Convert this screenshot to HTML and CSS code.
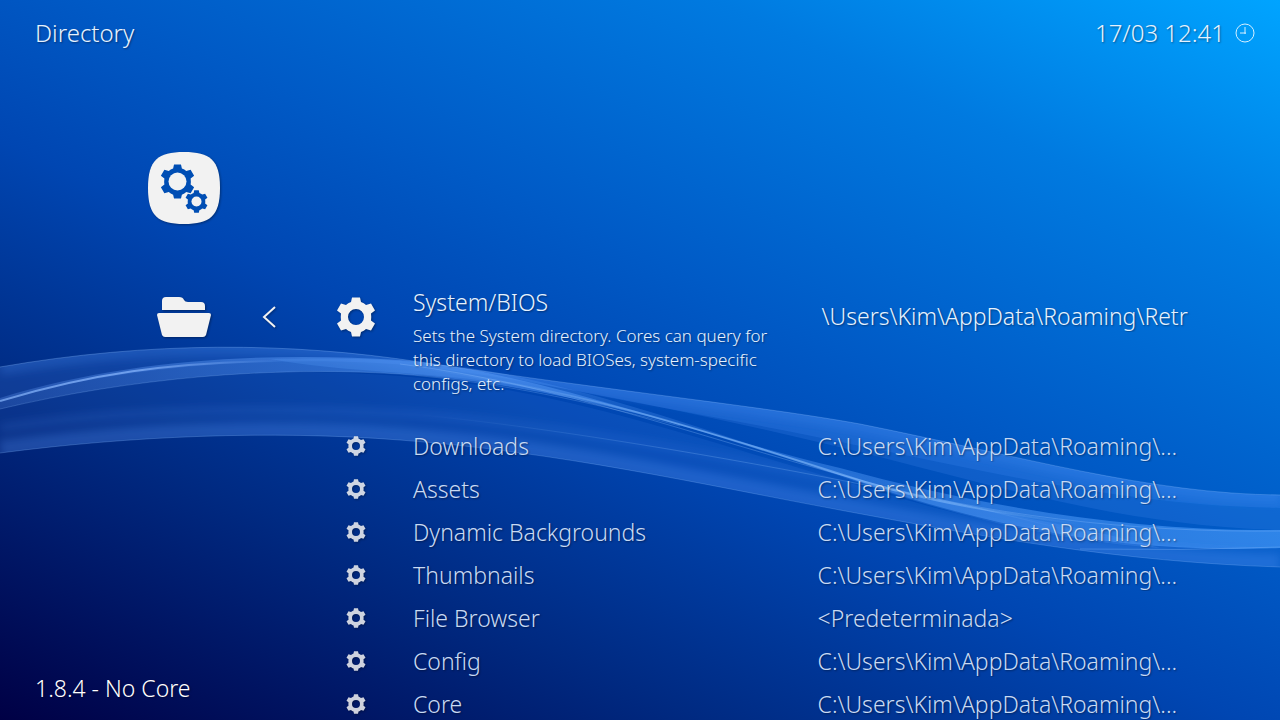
FILE: index.html
```html
<!DOCTYPE html>
<html lang="es">
<head>
  <meta charset="UTF-8">
  <meta name="viewport" content="width=device-width, initial-scale=1">
  <title>Directory</title>
  <link rel="stylesheet" href="styles.css">
</head>
<body>

  <!-- shared icon -->
  <svg class="sprite" width="0" height="0" aria-hidden="true">
    <symbol id="gear" viewBox="-20 -20 40 40">
      <path fill-rule="evenodd" d="M-4 -19.500H4L5 -15Q8 -14 10 -12L15 -13.500L19 -6.500L15 -3.500Q15.500 0 15 3.500L19 6.500L15 13.500L10 12Q8 14 5 15L4 19.500H-4L-5 15Q-8 14 -10 12L-15 13.500L-19 6.500L-15 3.500Q-15.500 0 -15 -3.500L-19 -6.500L-15 -13.500L-10 -12Q-8 -14 -5 -15ZM0 -8A8 8 0 1 0 0 8A8 8 0 1 0 0 -8Z"/>
    </symbol>
  </svg>

  <div class="screen">
    <svg class="waves" viewBox="0 0 1280 720" preserveAspectRatio="none" aria-hidden="true">
      <defs>
        <linearGradient id="fade-out" gradientUnits="userSpaceOnUse" x1="0" y1="0" x2="280" y2="0">
          <stop offset="0" stop-color="#8ab8ff" stop-opacity=".7"/>
          <stop offset=".5" stop-color="#8ab8ff" stop-opacity=".7"/>
          <stop offset="1" stop-color="#8ab8ff" stop-opacity="0"/>
        </linearGradient>
        <linearGradient id="fade-both" gradientUnits="userSpaceOnUse" x1="420" y1="0" x2="1080" y2="0">
          <stop offset="0" stop-color="#8fc4ff" stop-opacity="0"/>
          <stop offset=".4" stop-color="#8fc4ff" stop-opacity=".5"/>
          <stop offset=".8" stop-color="#8fc4ff" stop-opacity=".5"/>
          <stop offset="1" stop-color="#8fc4ff" stop-opacity="0"/>
        </linearGradient>
        <linearGradient id="glow" gradientUnits="userSpaceOnUse" x1="0" y1="0" x2="1280" y2="0">
          <stop offset="0" stop-color="#6ea4ff" stop-opacity=".25"/>
          <stop offset=".35" stop-color="#5ea2ff" stop-opacity=".5"/>
          <stop offset=".6" stop-color="#5ea2ff" stop-opacity=".35"/>
          <stop offset="1" stop-color="#4ea0ff" stop-opacity=".6"/>
        </linearGradient>
        <filter id="soft" x="-5%" y="-20%" width="110%" height="140%">
          <feGaussianBlur stdDeviation="4"/>
        </filter>
        <clipPath id="upper"><path d="M0 367C150 341 290 342 420 362C620 392 760 406 860 424C1020 456 1150 494 1280 495V560H0Z"/></clipPath>
        <clipPath id="lower"><path d="M0 340H1280V567C1120 562 980 536 840 510C700 484 560 452 400 440C270 430 130 436 0 453Z"/></clipPath>
      </defs>

      <!-- upper ribbon -->
      <path fill="#5c9cff" fill-opacity=".16" d="M0 367C150 341 290 342 420 362C620 392 760 406 860 424C1020 456 1150 494 1280 495V530C1130 526 1010 490 860 452C720 418 560 384 420 366C290 354 130 364 0 400Z"/>
      <path fill="#4c98ff" fill-opacity=".18" d="M480 371C640 394 760 406 860 424C1020 456 1150 494 1280 495V508C1130 506 1000 474 860 446C740 420 600 398 480 371Z"/>
      <g clip-path="url(#upper)">
        <path fill="none" stroke="#4c98ff" stroke-opacity=".2" stroke-width="16" filter="url(#soft)" d="M0 367C150 341 290 342 420 362C620 392 760 406 860 424C1020 456 1150 494 1280 495"/>
      </g>

      <!-- middle ribbon -->
      <path fill="url(#glow)" d="M0 398C130 358 270 352 400 360C540 372 680 430 840 468C980 506 1130 532 1280 530V548C1130 554 1000 530 860 482C720 434 560 384 400 374C270 366 130 378 0 409Z"/>
      <path fill="#5ea2ff" fill-opacity=".22" d="M270 359C360 357 430 360 500 373C620 398 700 428 840 474C960 510 1060 520 1160 548C1040 540 930 508 840 476C700 430 600 398 500 383C420 371 340 372 270 359Z"/>

      <!-- lower ribbon -->
      <path fill="#5c9cff" fill-opacity=".1" d="M0 409C130 378 270 366 400 376C560 388 700 440 860 486C1000 530 1120 550 1280 548V567C1120 562 980 536 840 510C700 484 560 452 400 440C270 430 130 436 0 453Z"/>
      <g clip-path="url(#lower)" fill="none" stroke="#5c9cff" filter="url(#soft)">
        <path stroke-opacity=".15" stroke-width="8" d="M0 428C140 407 290 408 420 415C560 426 700 452 860 484"/>
        <path stroke-opacity=".25" stroke-width="18" d="M0 449C130 432 270 426 400 436C560 448 700 480 840 506C980 532 1120 558 1280 563"/>
      </g>

      <!-- bright strands -->
      <g fill="none" stroke="#8fc0ff">
        <path stroke-opacity=".3" d="M0 367C150 341 290 342 420 362C620 392 760 406 860 424C1020 456 1150 494 1280 495"/>
        <path stroke="url(#fade-out)" stroke-width="2" d="M0 401C90 374 170 362 280 361"/>
        <path stroke="url(#fade-both)" stroke-width="2" d="M420 368C600 394 720 436 840 474C900 494 960 508 1080 524"/>
        <path stroke-opacity=".3" d="M400 364C560 384 700 438 860 480C980 514 1130 533 1280 531"/>
        <path stroke-opacity=".25" d="M0 409C130 378 270 366 400 374C500 382 590 402 680 426"/>
        <path stroke="url(#fade-both)" stroke-opacity=".5" d="M420 415C560 428 760 464 860 484C960 502 1000 514 1060 528"/>
        <path stroke-opacity=".3" d="M1080 549Q1180 551 1280 547"/>
        <path stroke-opacity=".25" d="M0 453C130 436 270 430 400 440C560 452 700 484 840 510C980 536 1120 562 1280 567"/>
      </g>
    </svg>

    <div class="menu">
      <header class="top-bar">
        <h1>Directory</h1>
        <div class="clock">
          <time>17/03 12:41</time>
          <svg class="clock-icon" viewBox="0 0 20 20" aria-hidden="true">
            <circle cx="10" cy="10" r="9"/>
            <path d="M10 4V11M5 10H11"/>
          </svg>
        </div>
      </header>

      <main class="content">
        <aside class="sidebar">
          <nav class="tabs">
            <button class="tab" type="button" aria-label="Settings">
              <svg class="tab-icon settings-icon" viewBox="0 0 74 74">
                <path class="tile" d="M37 1C63 1 73 9 73 37S63 73 37 73S1 65 1 37S11 1 37 1Z"/>
                <use class="tile-gear" href="#gear" x="13" y="13" width="35" height="35"/>
                <use class="tile-gear" href="#gear" x="38" y="39" width="23" height="23"/>
                <circle class="tile" cx="30.500" cy="30.500" r="9"/>
                <circle class="tile" cx="49.500" cy="50.500" r="5"/>
              </svg>
            </button>
            <button class="tab active" type="button" aria-label="Directory">
              <svg class="tab-icon folder-icon" viewBox="0 0 54 42">
                <path d="M5 14V5Q5 1 9 1H22Q26 1 27 4Q28 6 31 6H44Q48 6 48 10V14Z"/>
                <path d="M2 17H52Q54 17 54 19L49 39Q48 41 46 41H8Q6 41 5 39L0 19Q0 17 2 17Z"/>
              </svg>
            </button>
            <button class="back" type="button" aria-label="Back">
              <svg class="back-icon" viewBox="0 0 14 24"><path d="M13 2L2 12L13 22"/></svg>
            </button>
          </nav>
          <p class="version">1.8.4 - No Core</p>
        </aside>

        <ul class="entries">
          <li>
            <button class="entry selected" type="button">
              <svg class="gear"><use href="#gear"/></svg>
              <span class="label">System/BIOS
                <small>Sets the System directory. Cores can query for this directory to load BIOSes, system-specific configs, etc.</small>
              </span>
              <span class="value">\Users\Kim\AppData\Roaming\Retr</span>
            </button>
          </li>
          <li>
            <button class="entry" type="button">
              <svg class="gear"><use href="#gear"/></svg>
              <span class="label">Downloads</span>
              <span class="value">C:\Users\Kim\AppData\Roaming\...</span>
            </button>
          </li>
          <li>
            <button class="entry" type="button">
              <svg class="gear"><use href="#gear"/></svg>
              <span class="label">Assets</span>
              <span class="value">C:\Users\Kim\AppData\Roaming\...</span>
            </button>
          </li>
          <li>
            <button class="entry" type="button">
              <svg class="gear"><use href="#gear"/></svg>
              <span class="label">Dynamic Backgrounds</span>
              <span class="value">C:\Users\Kim\AppData\Roaming\...</span>
            </button>
          </li>
          <li>
            <button class="entry" type="button">
              <svg class="gear"><use href="#gear"/></svg>
              <span class="label">Thumbnails</span>
              <span class="value">C:\Users\Kim\AppData\Roaming\...</span>
            </button>
          </li>
          <li>
            <button class="entry" type="button">
              <svg class="gear"><use href="#gear"/></svg>
              <span class="label">File Browser</span>
              <span class="value">&lt;Predeterminada&gt;</span>
            </button>
          </li>
          <li>
            <button class="entry" type="button">
              <svg class="gear"><use href="#gear"/></svg>
              <span class="label">Config</span>
              <span class="value">C:\Users\Kim\AppData\Roaming\...</span>
            </button>
          </li>
          <li>
            <button class="entry" type="button">
              <svg class="gear"><use href="#gear"/></svg>
              <span class="label">Core</span>
              <span class="value">C:\Users\Kim\AppData\Roaming\...</span>
            </button>
          </li>
        </ul>
      </main>
    </div>
  </div>

</body>
</html>
```
FILE: styles.css
```css
* { box-sizing: border-box; }

body {
  margin: 0;
  font-family: "Noto Sans", "Open Sans", sans-serif;
  font-weight: 300;
  font-size: 23px;
  line-height: 32px;
  color: #e6f2ff;
  text-shadow: 1px 1px 2px rgba(0, 0, 0, 0.4);
}

h1, p, ul {
  margin: 0;
  padding: 0;
}

button {
  padding: 0;
  border: none;
  background: none;
  color: inherit;
  font: inherit;
  text-align: left;
  text-shadow: inherit;
  cursor: pointer;
}

svg { display: block; }

.sprite { position: absolute; }

/* background and menu share one grid cell */
.screen {
  display: grid;
  height: 100vh;
  overflow: hidden;
  background: linear-gradient(25deg, #000045 0%, #002a82 25%, #0046b2 44%, #005ac6 58%, #007ae0 80%, #00a4ff 100%);
}

.waves,
.menu {
  grid-area: 1 / 1;
  min-width: 0;
  min-height: 0;
}

.waves {
  width: 100%;
  height: 100%;
}

.menu {
  display: flex;
  flex-direction: column;
  height: 100vh;
}

.top-bar {
  display: flex;
  justify-content: space-between;
  align-items: center;
  padding: 17px 25px 17px 35px;
  font-size: 24px;
}

.top-bar h1 {
  font-size: 24px;
  font-weight: 300;
}

.clock {
  display: flex;
  align-items: center;
  gap: 10px;
}

.clock-icon {
  width: 20px;
  height: 20px;
  fill: none;
  stroke: #d5efff;
}

.content {
  display: flex;
  flex: 1;
  min-height: 0;
}

.sidebar {
  display: flex;
  flex-direction: column;
  justify-content: space-between;
  width: 336px;
  padding: 85px 0 16px 35px;
}

.tabs {
  display: grid;
  grid-template-columns: 74px 24px;
  gap: 71px 41px;
  align-items: center;
  padding-left: 112px;
}

.tab {
  grid-column: 1;
  display: flex;
  justify-content: center;
}

.tab-icon,
.back-icon,
.gear {
  fill: #f2f2f2;
  filter: drop-shadow(1px 1px 1px rgba(0, 0, 0, 0.35));
}

.settings-icon {
  width: 74px;
  height: 74px;
}

.tile-gear { fill: #004eb4; }

.folder-icon {
  width: 54px;
  height: 42px;
}

.back-icon {
  width: 14px;
  height: 24px;
  fill: none;
  stroke: #f2f2f2;
  stroke-width: 2;
}

.version { color: #fff; }

.entries {
  flex: 1;
  min-width: 0;
  padding-top: 220px;
  list-style: none;
}

.entry {
  display: grid;
  grid-template-columns: 77px 7fr 8fr;
  align-items: center;
  width: 100%;
  height: 43px;
  color: #c8daf4;
}

.gear {
  width: 20px;
  height: 20px;
  margin-left: 10px;
  opacity: 0.85;
}

.value {
  overflow: hidden;
  white-space: nowrap;
}

.selected {
  align-items: start;
  height: 138px;
  color: #e6f2ff;
}

.selected .gear {
  width: 40px;
  height: 40px;
  margin: 11px 0 0;
  opacity: 1;
}

.selected .value { padding: 14px 0 0 4px; }

.label small {
  display: block;
  max-width: 375px;
  padding-top: 6px;
  font-size: 17px;
  line-height: 24px;
}
```
